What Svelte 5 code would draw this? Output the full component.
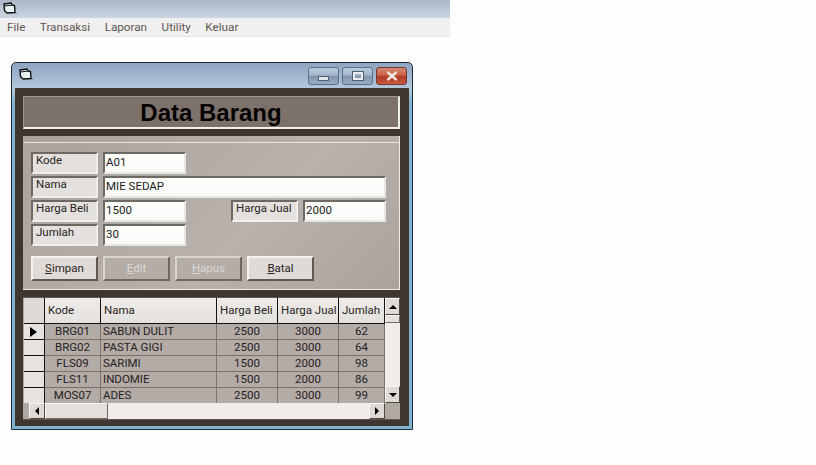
<script>
	const rows = [
		{ kode: 'BRG01', nama: 'SABUN DULIT', beli: 2500, jual: 3000, jumlah: 62 },
		{ kode: 'BRG02', nama: 'PASTA GIGI', beli: 2500, jual: 3000, jumlah: 64 },
		{ kode: 'FLS09', nama: 'SARIMI', beli: 1500, jual: 2000, jumlah: 98 },
		{ kode: 'FLS11', nama: 'INDOMIE', beli: 1500, jual: 2000, jumlah: 86 },
		{ kode: 'MOS07', nama: 'ADES', beli: 2500, jual: 3000, jumlah: 99 }
	];
	const menus = ['File', 'Transaksi', 'Laporan', 'Utility', 'Keluar'];
</script>

{#snippet appIcon()}
	<svg class="app-icon" width="15" height="13" viewBox="0 0 15 13">
		<path d="M1 2 L8 1 L9 3 L11.5 3.5 L12 10.5 L4 11 L1.5 8.5 Z" fill="#e8f2ee" stroke="#0c0c14" stroke-width="1.4" stroke-linejoin="miter" />
		<path d="M1.5 4 L9.5 3" stroke="#0c0c14" stroke-width="1" fill="none" />
		<path d="M12.5 11.5 h1.5" stroke="#77808c" stroke-width="1" />
	</svg>
{/snippet}

<div class="page">
	<div class="parent-bar">
		<div class="parent-title">{@render appIcon()}</div>
		<nav class="menu">
			{#each menus as m}
				<span>{m}</span>
			{/each}
		</nav>
	</div>

	<div class="window">
		<div class="titlebar">
			{@render appIcon()}
			<div class="controls">
				<div class="ctl"><i class="min"></i></div>
				<div class="ctl"><i class="max"></i></div>
				<div class="ctl close">
					<svg width="14" height="10" viewBox="0 0 14 10">
						<path d="M2.5 1 L11.5 9 M11.5 1 L2.5 9" stroke="#f2e6e0" stroke-width="2.6" />
					</svg>
				</div>
			</div>
		</div>

		<div class="client">
			<div class="heading">Data Barang</div>

			<div class="form">
				<div class="form-row">
					<div class="lbl">Kode</div>
					<div class="input short">A01</div>
				</div>
				<div class="form-row">
					<div class="lbl">Nama</div>
					<div class="input long">MIE SEDAP</div>
				</div>
				<div class="form-row">
					<div class="lbl">Harga Beli</div>
					<div class="input short">1500</div>
					<div class="lbl jual">Harga Jual</div>
					<div class="input short">2000</div>
				</div>
				<div class="form-row">
					<div class="lbl">Jumlah</div>
					<div class="input short">30</div>
				</div>
				<div class="buttons">
					<div class="btn"><u>S</u>impan</div>
					<div class="btn off"><u>E</u>dit</div>
					<div class="btn off"><u>H</u>apus</div>
					<div class="btn"><u>B</u>atal</div>
				</div>
			</div>

			<div class="grid">
				<div class="grid-top">
					<div class="table">
						<div class="th"></div>
						<div class="th">Kode</div>
						<div class="th">Nama</div>
						<div class="th">Harga Beli</div>
						<div class="th">Harga Jual</div>
						<div class="th">Jumlah</div>
						{#each rows as r, i}
							<div class="ind">
								{#if i === 0}<span class="pointer"></span>{/if}
							</div>
							<div class="td c">{r.kode}</div>
							<div class="td">{r.nama}</div>
							<div class="td c">{r.beli}</div>
							<div class="td c">{r.jual}</div>
							<div class="td c">{r.jumlah}</div>
						{/each}
					</div>
					<div class="vscroll">
						<div class="sb-btn v"><span class="arrow up"></span></div>
						<div class="sb-thumb-v"></div>
						<div class="sb-track"></div>
						<div class="sb-btn v"><span class="arrow down"></span></div>
					</div>
				</div>
				<div class="hscroll">
					<div class="sb-btn h"><span class="arrow left"></span></div>
					<div class="sb-thumb-h"></div>
					<div class="sb-track"></div>
					<div class="sb-btn h"><span class="arrow right"></span></div>
					<div class="corner"></div>
				</div>
			</div>
		</div>
	</div>
</div>

<style>
	:global(body) {
		background: #fdfdfd;
		font-family: "Roboto", "Liberation Sans", Arial, sans-serif;
		font-size: 11.5px;
		color: #151210;
	}

	.page {
		width: 816px;
		height: 465px;
		overflow: hidden;
		display: flex;
		flex-direction: column;
	}

	.parent-bar {
		width: 450px;
		height: 38px;
		flex: none;
	}

	.parent-title {
		height: 18px;
		box-sizing: border-box;
		padding: 2px 0 0 3px;
		background: linear-gradient(to bottom, #a9b6c7, #cbd5e1);
	}

	.app-icon {
		display: block;
	}

	.menu {
		height: 19px;
		box-sizing: border-box;
		background: #f0f0f0;
		border-bottom: 1px solid #e6e6e6;
		display: flex;
		gap: 14.5px;
		padding: 0 0 0 7px;
		align-items: center;
		font-size: 11.7px;
		color: #5e5752;
	}

	.window {
		width: 402px;
		height: 368px;
		box-sizing: border-box;
		margin: 24px 0 0 11px;
		flex: none;
		display: flex;
		flex-direction: column;
		border: 1px solid #1e2a35;
		border-radius: 5px 5px 0 0;
		background: linear-gradient(to bottom, #8fa5c0, #b4c8dc 26px, #7fb0cc 40px);
		padding: 0 3px 3px;
	}

	.titlebar {
		height: 25px;
		flex: none;
		display: flex;
		justify-content: space-between;
		padding: 5px 2px 0 4px;
		box-sizing: border-box;
	}

	.controls {
		display: flex;
		gap: 3px;
	}

	.ctl {
		width: 31px;
		height: 18px;
		box-sizing: border-box;
		margin-top: -1px;
		border: 1px solid #5a6f88;
		border-radius: 3px;
		background: linear-gradient(to bottom, #b8c9dc, #a4b6cb 45%, #7f93aa 50%, #98acc3);
		display: flex;
		align-items: center;
		justify-content: center;
	}

	.ctl.close {
		border-color: #6e3a32;
		background: linear-gradient(to bottom, #d58a70, #c9604a 45%, #b03a24 55%, #c65a40);
	}

	.min {
		display: block;
		width: 9px;
		height: 3px;
		margin-top: 4px;
		background: #e2e6ea;
		border: 1px solid #4f5f72;
	}

	.max {
		display: block;
		width: 6px;
		height: 4px;
		border: 2px solid #e8ecf0;
		outline: 1px solid #4f5f72;
	}

	.client {
		flex: 1;
		background: #3f3632;
		padding: 8px 9px 8px 8px;
		display: flex;
		flex-direction: column;
		gap: 7px;
		min-height: 0;
	}

	.heading {
		height: 33px;
		box-sizing: border-box;
		flex: none;
		background: #7d716b;
		border: 1px solid;
		border-color: #a09690 #f0ece8 #f4f0ec #a09690;
		border-width: 1px 2px 2px 1px;
		text-align: center;
		font-family: "Liberation Sans", Arial, sans-serif;
		font-size: 24px;
		font-weight: bold;
		line-height: 31px;
		color: #050302;
	}

	.form {
		height: 154px;
		flex: none;
		box-sizing: border-box;
		background: linear-gradient(135deg, #aaa29d, #b8b1ac 60%, #aba39e);
		padding: 16px 8px 0;
		border-right: 1px solid #f0ece8;
		border-bottom: 1px solid #f0ece8;
		position: relative;
		display: flex;
		flex-direction: column;
		gap: 2px;
	}

	.form::before {
		content: '';
		position: absolute;
		left: 1px;
		right: 0;
		top: 6px;
		border-top: 1px solid #e8e4e0;
	}

	.form-row {
		display: flex;
		height: 22px;
		gap: 5px;
	}

	.lbl {
		width: 67px;
		box-sizing: border-box;
		background: #e3e0dd;
		border: 2px solid;
		border-color: #6f6862 #f0eeec #f0eeec #6f6862;
		padding: 0 0 0 3px;
		line-height: 13px;
		color: #2a2522;
		white-space: nowrap;
	}

	.lbl.jual {
		margin-left: 40px;
	}

	.input {
		box-sizing: border-box;
		background: #fbfbfa;
		border: 2px solid;
		border-color: #6f6862 #e8e6e4 #e8e6e4 #6f6862;
		padding: 0 0 0 1px;
		line-height: 16px;
		color: #211c1a;
	}

	.input.short {
		width: 83px;
	}

	.input.long {
		width: 283px;
	}

	.buttons {
		display: flex;
		gap: 5px;
		margin-top: 8px;
	}

	.btn {
		width: 67px;
		height: 25px;
		box-sizing: border-box;
		background: #dedad7;
		border: 2px solid;
		border-color: #f4f2f0 #5f5852 #5f5852 #f4f2f0;
		text-align: center;
		line-height: 21px;
		color: #2a2522;
	}

	.btn.off {
		background: #b3aca7;
		color: #dcd8d5;
		border-color: #d8d4d0 #6f6862 #6f6862 #d8d4d0;
	}

	.grid {
		height: 122px;
		flex: none;
		background: #b0a8a3;
		border-top: 1px solid #5f5852;
		box-sizing: border-box;
		display: flex;
		flex-direction: column;
	}

	.grid-top {
		height: 105px;
		flex: none;
		display: flex;
		padding-left: 1px;
		overflow: hidden;
	}

	.table {
		width: 361px;
		flex: none;
		display: grid;
		grid-template-columns: 21px 56px 116px 61px 61px 46px;
		grid-template-rows: 26px repeat(5, 16px);
		overflow: hidden;
	}

	.th {
		box-sizing: border-box;
		background: linear-gradient(to bottom, #eeecea, #e3e0dd);
		border-right: 1px solid #141210;
		border-bottom: 1px solid #141210;
		padding: 0 0 0 3px;
		line-height: 25px;
		white-space: nowrap;
		overflow: hidden;
		color: #2a2522;
	}

	.th:first-child {
		background: #dedad7;
	}

	.th:last-child {
		border-right: 0;
	}

	.ind {
		box-sizing: border-box;
		background: #e6e3e0;
		border-right: 1px solid #141210;
		border-bottom: 1px solid #141210;
		display: flex;
		align-items: center;
		padding-left: 6px;
	}

	.pointer {
		display: block;
		width: 0;
		height: 0;
		border-left: 7px solid #000;
		border-top: 5px solid transparent;
		border-bottom: 5px solid transparent;
	}

	.td {
		box-sizing: border-box;
		background: #b3aba6;
		border-right: 1px solid #7a726c;
		border-bottom: 1px solid #7a726c;
		padding: 0 0 0 2px;
		line-height: 14px;
		color: #26211e;
		white-space: nowrap;
		overflow: hidden;
	}

	.td.c {
		text-align: center;
		padding: 0;
	}

	.vscroll {
		width: 15px;
		flex: none;
		display: flex;
		flex-direction: column;
	}

	.hscroll {
		height: 16px;
		flex: none;
		display: flex;
		padding-left: 6px;
		border-bottom: 1px solid #5f5852;
	}

	.sb-track {
		flex: 1;
		background: repeating-conic-gradient(#f8f7f5 0 25%, #e6e3e0 0 50%) 0 0 / 2px 2px;
	}

	.sb-btn {
		box-sizing: border-box;
		background: #dedad7;
		border: 1px solid;
		border-color: #f8f6f4 #4e4843 #4e4843 #f8f6f4;
		display: flex;
		align-items: center;
		justify-content: center;
		flex: none;
	}

	.sb-btn.v {
		height: 17px;
	}

	.sb-btn.h {
		width: 16px;
	}

	.sb-thumb-v {
		height: 8px;
		flex: none;
		box-sizing: border-box;
		background: #e3e0dd;
		border: 1px solid;
		border-color: #f8f6f4 #6f6862 #6f6862 #f8f6f4;
	}

	.sb-thumb-h {
		width: 63px;
		flex: none;
		box-sizing: border-box;
		background: #e3e0dd;
		border: 1px solid;
		border-color: #f8f6f4 #6f6862 #6f6862 #f8f6f4;
	}

	.corner {
		width: 15px;
		flex: none;
		background: #b0a8a3;
	}

	.arrow {
		display: block;
		width: 0;
		height: 0;
		border: 3px solid transparent;
	}

	.arrow.up {
		border-width: 0 4px 4px;
		border-bottom-color: #000;
	}

	.arrow.down {
		border-width: 4px 4px 0;
		border-top-color: #000;
	}

	.arrow.left {
		border-width: 4px 4px 4px 0;
		border-right-color: #000;
	}

	.arrow.right {
		border-width: 4px 0 4px 4px;
		border-left-color: #000;
	}
</style>
